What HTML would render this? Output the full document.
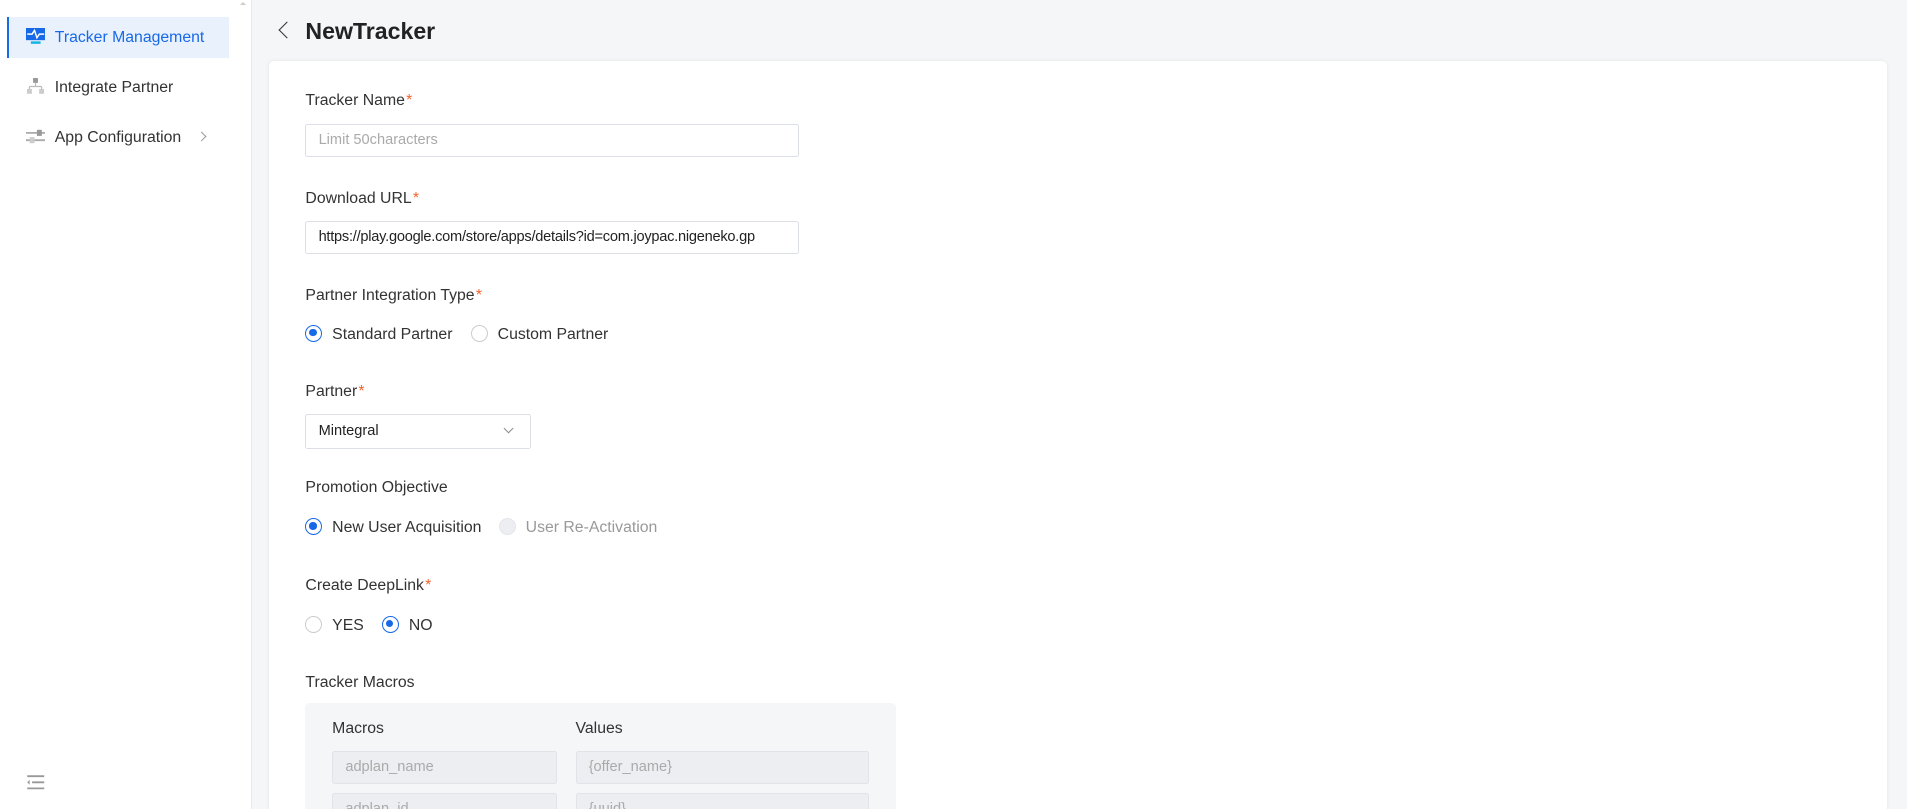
<!DOCTYPE html>
<html><head><meta charset="utf-8"><style>
html,body{margin:0;padding:0;width:1907px;height:809px;overflow:hidden;background:#f5f6f8;}
#w{zoom:1.2168;width:1567px;height:665px;position:relative;font-family:"Liberation Sans",sans-serif;font-size:13px;color:#333;white-space:nowrap;}
.a{position:absolute;}
.sb{left:0;top:0;width:207px;height:665px;background:#fff;border-right:1px solid #e8e9ec;box-sizing:border-box;}
.act{left:6px;top:14px;width:182px;height:34px;background:#e9f1fd;border-left:2px solid #1769e8;box-sizing:border-box;}
.mi{left:45px;font-size:13px;line-height:16px;}
.card{left:221px;top:50px;width:1330px;height:640px;background:#fff;border-radius:4px;box-shadow:0 0 3px rgba(0,0,0,.08);}
.lb{left:251px;line-height:16px;}
.lb b{color:#f5622d;font-weight:normal;margin-left:1px;}
.in{left:251px;width:406px;height:27px;border:1px solid #dcdfe6;box-sizing:border-box;border-radius:2px;padding-left:10px;line-height:25px;font-size:12px;overflow:hidden;}
.r{width:14px;height:14px;border-radius:50%;border:1px solid #ccc;box-sizing:border-box;background:#fff;}
.r.on{border:1.5px solid #1769e8;}
.r.on:after{content:"";position:absolute;left:2.5px;top:2.5px;width:6px;height:6px;border-radius:50%;background:#1769e8;}
.rt{line-height:16px;}
.mi2{height:27px;background:#eceef2;border:1px solid #e1e3e8;box-sizing:border-box;border-radius:2px;color:#aaa;padding-left:10px;line-height:25px;font-size:12px;}
</style></head><body><div id="w">
<div class="a sb"></div>
<div class="a" style="left:197px;top:2px;width:0;height:0;border-left:3px solid transparent;border-right:3px solid transparent;border-bottom:3px solid #ccc"></div>
<div class="a act"></div>
<svg class="a" style="left:21px;top:23px" width="16" height="14" viewBox="0 0 16 14"><rect x="0" y="0" width="16" height="10" fill="#1769e8"/><polyline points="1,5 5,5 7,2 9,8 11,5 15,5" fill="none" stroke="#fff" stroke-width="1.2"/><rect x="4" y="11" width="8" height="2" fill="#12b3e0"/></svg>
<div class="a mi" style="top:23px;color:#1769e8">Tracker Management</div>
<svg class="a" style="left:22px;top:64px" width="14" height="14" viewBox="0 0 14 14"><rect x="5" y="0" width="4" height="4" fill="#999"/><path d="M7 4v3M2 7h10M2 7v2M12 7v2" stroke="#bbb" fill="none"/><rect x="0" y="9" width="4" height="4" fill="#ccc"/><rect x="10" y="9" width="4" height="4" fill="#ccc"/></svg>
<div class="a mi" style="top:64px">Integrate Partner</div>
<svg class="a" style="left:21px;top:105px" width="16" height="14" viewBox="0 0 16 14"><path d="M0 4h16M0 10h16" stroke="#aaa" stroke-width="1.5"/><rect x="9" y="1.5" width="4" height="5" fill="#999"/><rect x="3" y="7.5" width="4" height="5" fill="#ccc"/></svg>
<div class="a mi" style="top:105px">App Configuration</div>
<div class="a" style="left:163px;top:109px;width:5px;height:5px;border-top:1px solid #999;border-right:1px solid #999;transform:rotate(45deg)"></div>
<svg class="a" style="left:21px;top:637px" width="16" height="13" viewBox="0 0 16 13"><path d="M1 1h14M5 6h10M1 11h14" stroke="#999" stroke-width="1.5"/><path d="M3 4l-2 2 2 2z" fill="#999"/></svg>
<div class="a" style="left:231px;top:20px;width:9px;height:9px;border-left:1.5px solid #333;border-bottom:1.5px solid #333;transform:rotate(45deg)"></div>
<div class="a" style="left:251px;top:14px;font-size:19px;font-weight:bold;color:#222;line-height:24px">NewTracker</div>
<div class="a card"></div>
<div class="a lb" style="top:75px">Tracker Name<b>*</b></div>
<div class="a in" style="top:102px;color:#aaa">Limit 50characters</div>
<div class="a lb" style="top:155px">Download URL<b>*</b></div>
<div class="a in" style="top:182px;color:#222;letter-spacing:-0.2px">https://play.google.com/store/apps/details?id=com.joypac.nigeneko.gp</div>
<div class="a lb" style="top:235px">Partner Integration Type<b>*</b></div>
<div class="a r on" style="left:251px;top:267px"></div><div class="a rt" style="left:273px;top:267px">Standard Partner</div>
<div class="a r" style="left:387px;top:267px"></div><div class="a rt" style="left:409px;top:267px">Custom Partner</div>
<div class="a lb" style="top:314px">Partner<b>*</b></div>
<div class="a in" style="top:340px;width:185px;height:29px;line-height:27px;color:#222">Mintegral</div>
<div class="a" style="left:415px;top:349px;width:5px;height:5px;border-right:1px solid #888;border-bottom:1px solid #888;transform:rotate(45deg)"></div>
<div class="a lb" style="top:393px">Promotion Objective</div>
<div class="a r on" style="left:251px;top:426px"></div><div class="a rt" style="left:273px;top:426px">New User Acquisition</div>
<div class="a r" style="left:410px;top:426px;background:#eceef2;border-color:#e4e6ea"></div><div class="a rt" style="left:432px;top:426px;color:#999">User Re-Activation</div>
<div class="a lb" style="top:473px">Create DeepLink<b>*</b></div>
<div class="a r" style="left:251px;top:506px"></div><div class="a rt" style="left:273px;top:506px">YES</div>
<div class="a r on" style="left:314px;top:506px"></div><div class="a rt" style="left:336px;top:506px">NO</div>
<div class="a lb" style="top:553px">Tracker Macros</div>
<div class="a" style="left:251px;top:578px;width:485px;height:100px;background:#f5f6f8;border-radius:4px"></div>
<div class="a rt" style="left:273px;top:591px">Macros</div>
<div class="a rt" style="left:473px;top:591px">Values</div>
<div class="a mi2" style="left:273px;top:617px;width:185px">adplan_name</div>
<div class="a mi2" style="left:473px;top:617px;width:241px">{offer_name}</div>
<div class="a mi2" style="left:273px;top:652px;width:185px">adplan_id</div>
<div class="a mi2" style="left:473px;top:652px;width:241px">{uuid}</div>
</div></body></html>
